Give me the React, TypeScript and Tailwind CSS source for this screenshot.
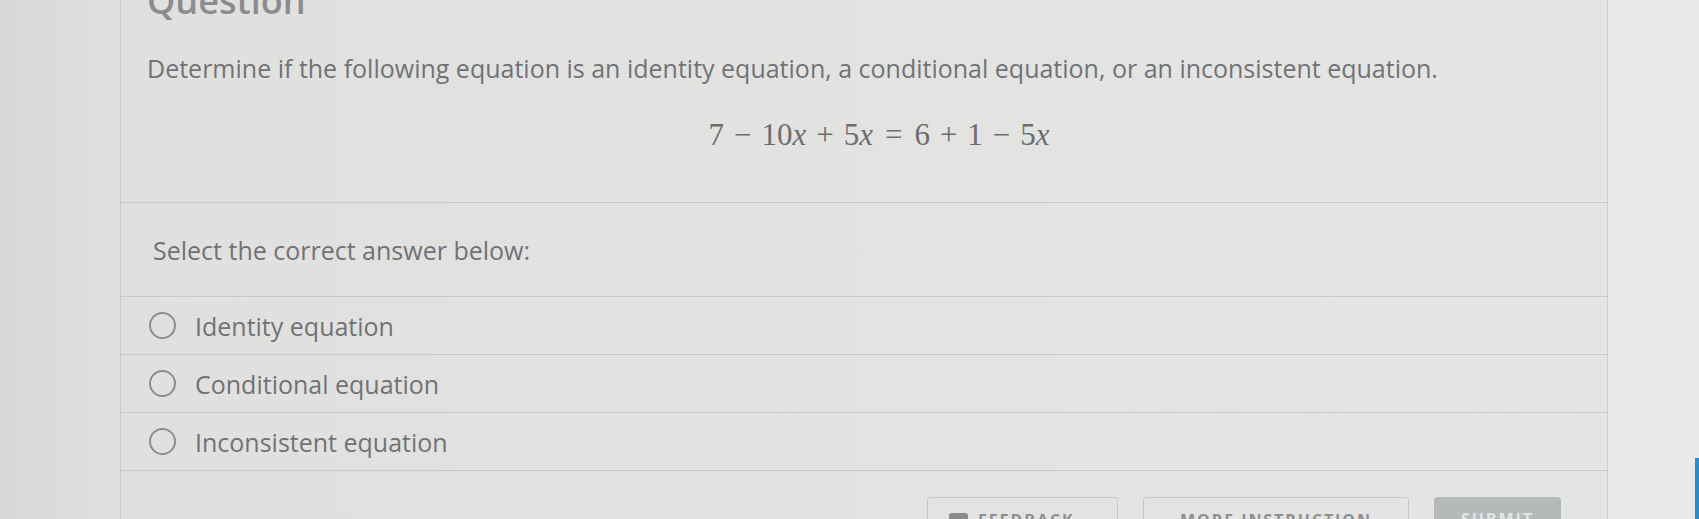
export default function App() {
  const options = ['Identity equation', 'Conditional equation', 'Inconsistent equation'];

  return (
    <div className="flex h-[519px] w-full overflow-hidden bg-[#e1e2e0] font-['Open_Sans',sans-serif] text-[#717276]">
      {/* left margin of the page */}
      <div className="w-[120px] shrink-0 bg-linear-to-r from-[#d8d9d7] to-[#dfe0de]" />

      {/* question panel */}
      <div className="flex w-[1488px] shrink-0 flex-col border-x border-[#cbccca] bg-linear-to-r from-[#e0e1df] to-[#e5e6e4]">
        <h1 className="-mt-[21px] ml-[26px] h-[44px] text-[36px] font-semibold leading-[44px] text-[#8b8c90]">
          Question
        </h1>
        <p className="ml-[26px] mt-[28px] text-[25px] leading-[34px]">
          Determine if the following equation is an identity equation, a conditional equation, or an inconsistent equation.
        </p>

        <div className="mt-[30px] flex h-[40px] items-center justify-center pl-[30px] font-['Liberation_Serif',serif] text-[31px] leading-[40px] text-[#6c6d70]">
          <span>7</span>
          <span className="mx-[10px]">−</span>
          <span>10</span>
          <span className="italic">x</span>
          <span className="mx-[10px]">+</span>
          <span>5</span>
          <span className="italic">x</span>
          <span className="mx-[12px]">=</span>
          <span>6</span>
          <span className="mx-[10px]">+</span>
          <span>1</span>
          <span className="mx-[10px]">−</span>
          <span>5</span>
          <span className="italic">x</span>
        </div>

        {/* answers */}
        <div className="mt-[47px] border-t border-[#c9cac8]">
          <div className="h-[94px] border-b border-[#c9cac8] pl-[32px] pt-[30px] text-[25px] leading-[34px]">
            Select the correct answer below:
          </div>
          {options.map((label) => (
            <div
              key={label}
              className="flex h-[58px] items-center gap-[19px] border-b border-[#c9cac8] pl-[28px]"
            >
              <span className="h-[27px] w-[27px] shrink-0 rounded-full border-2 border-[#8c8d90]" />
              <span className="text-[25px] leading-[34px]">{label}</span>
            </div>
          ))}
        </div>

        {/* action buttons */}
        <div className="mt-[26px] flex justify-end gap-[25px] pr-[46px]">
          <button className="flex h-[48px] w-[191px] items-start gap-[10px] rounded-[3px] border border-[#c6c7c6] pl-[21px] pt-[14px] text-[16px] font-bold uppercase leading-none tracking-[0.12em] text-[#8e8f92]">
            <span className="mt-[1px] h-[18px] w-[19px] rounded-[3px] bg-[#8a8b8e]" />
            Feedback
          </button>
          <button className="flex h-[48px] w-[266px] items-start justify-center rounded-[3px] border border-[#c6c7c6] pt-[14px] text-[16px] font-bold uppercase leading-none tracking-[0.12em] text-[#8e8f92]">
            More Instruction
          </button>
          <button className="flex h-[48px] w-[127px] items-start justify-center rounded-[4px] bg-[#b4b9b9] pt-[14px] text-[16px] font-bold uppercase leading-none tracking-[0.12em] text-[#e3e6e6]">
            Submit
          </button>
        </div>
      </div>

      {/* right margin with the edge of a blue element */}
      <div className="flex flex-1 flex-col items-end justify-end bg-[#e8e9e8]">
        <div className="h-[61px] w-[4px] bg-[#2f8ccc]" />
      </div>
    </div>
  );
}
